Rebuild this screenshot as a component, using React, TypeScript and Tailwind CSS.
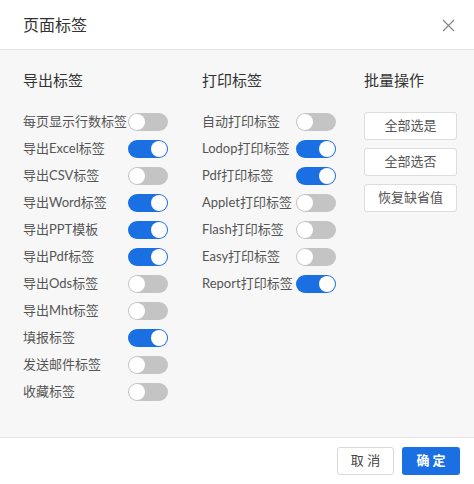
import React from "react";

const font = { fontFamily: 'Lato, "Noto Sans CJK SC", sans-serif' };

function Toggle({ on }: { on: boolean }) {
  return on ? (
    <div className="w-[40px] h-[18px] shrink-0 rounded-full bg-[#1a6fe3] flex items-center justify-end pr-[1px]">
      <div className="w-[16px] h-[16px] rounded-full bg-white" />
    </div>
  ) : (
    <div className="w-[40px] h-[18px] shrink-0 rounded-full bg-[#c4c4c4] flex items-center justify-start pl-[1px]">
      <div className="w-[16px] h-[16px] rounded-full bg-white" />
    </div>
  );
}

const col1: [string, boolean][] = [
  ["每页显示行数标签", false],
  ["导出Excel标签", true],
  ["导出CSV标签", false],
  ["导出Word标签", true],
  ["导出PPT模板", true],
  ["导出Pdf标签", true],
  ["导出Ods标签", false],
  ["导出Mht标签", false],
  ["填报标签", true],
  ["发送邮件标签", false],
  ["收藏标签", false],
];

const col2: [string, boolean][] = [
  ["自动打印标签", false],
  ["Lodop打印标签", true],
  ["Pdf打印标签", true],
  ["Applet打印标签", false],
  ["Flash打印标签", false],
  ["Easy打印标签", false],
  ["Report打印标签", true],
];

export default function App() {
  return (
    <div className="w-[474px] h-[484px] bg-white flex flex-col" style={font}>
      <div className="h-[50px] shrink-0 border-b border-[#e3e3e3] flex items-center justify-between pl-[23px] pr-[19px]">
        <span className="text-[16px] text-[#333] leading-none">页面标签</span>
        <svg width="13" height="13" viewBox="0 0 13 13" className="mt-[1px]">
          <path d="M1 1 L12 12 M12 1 L1 12" stroke="#8a8a8a" strokeWidth="1.3" fill="none" />
        </svg>
      </div>
      <div className="h-[387px] shrink-0 bg-[#f7f7f7] flex pl-[23px] pt-[20px]">
        <div className="w-[179px] flex flex-col">
          <div className="h-[20px] flex items-center text-[15px] text-[#333]">导出标签</div>
          <div className="mt-[18px] flex flex-col">
            {col1.map(([l, on]) => (
              <div key={l} className="h-[27px] flex items-center">
                <span className="w-[105px] text-[13px] text-[#555] whitespace-nowrap">{l}</span>
                <Toggle on={on} />
              </div>
            ))}
          </div>
        </div>
        <div className="w-[162px] flex flex-col">
          <div className="h-[20px] flex items-center text-[15px] text-[#333]">打印标签</div>
          <div className="mt-[18px] flex flex-col">
            {col2.map(([l, on]) => (
              <div key={l} className="h-[27px] flex items-center">
                <span className="w-[94px] text-[13px] text-[#555] whitespace-nowrap">{l}</span>
                <Toggle on={on} />
              </div>
            ))}
          </div>
        </div>
        <div className="w-[93px] flex flex-col">
          <div className="h-[20px] flex items-center text-[15px] text-[#333]">批量操作</div>
          <div className="mt-[22px] flex flex-col gap-[8px]">
            {["全部选是", "全部选否", "恢复缺省值"].map((t) => (
              <div key={t} className="h-[28px] bg-white border border-[#dcdcdc] rounded-[3px] flex items-center justify-center text-[13px] text-[#555]">
                {t}
              </div>
            ))}
          </div>
        </div>
      </div>
      <div className="flex-1 border-t border-[#e3e3e3] flex justify-end items-start pt-[9px] pr-[14px] gap-[8px]">
        <div className="w-[57px] h-[28px] bg-white border border-[#d9d9d9] rounded-[3px] flex items-center justify-center text-[13px] text-[#444]">取 消</div>
        <div className="w-[58px] h-[28px] bg-[#1a6fe3] rounded-[3px] flex items-center justify-center text-[13px] text-white font-bold">确 定</div>
      </div>
    </div>
  );
}
